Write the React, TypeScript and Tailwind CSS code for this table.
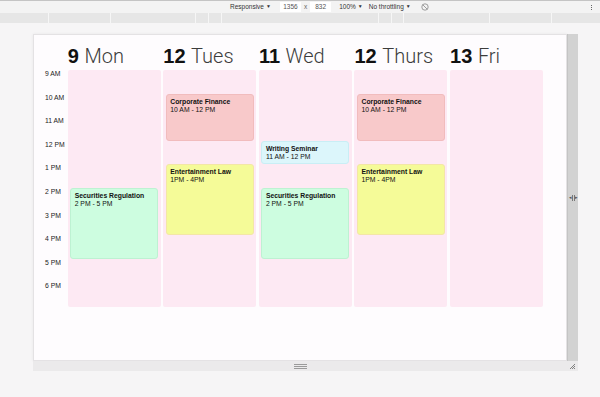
import React from 'react';

type CalEvent = { title: string; time: string; start: number; end: number; color: string };

const HOUR_PX = 23.6;
const FIRST_HOUR = 9;

const HOURS = ['9 AM', '10 AM', '11 AM', '12 PM', '1 PM', '2 PM', '3 PM', '4 PM', '5 PM', '6 PM'];

const EVENT_CLASS: Record<string, string> = {
  red: 'bg-[#f8c9ca] border-[#f1bcbd]',
  cyan: 'bg-[#dcf6fb] border-[#c9eef5]',
  yellow: 'bg-[#f5fb98] border-[#f3e6a6]',
  green: 'bg-[#cdfde0] border-[#bdf2d2]',
};

// start/end are the slot the block is drawn in, time is the label shown
const DAYS: { num: string; name: string; events: CalEvent[] }[] = [
  {
    num: '9',
    name: 'Mon',
    events: [{ title: 'Securities Regulation', time: '2 PM - 5 PM', start: 14, end: 17, color: 'green' }],
  },
  {
    num: '12',
    name: 'Tues',
    events: [
      { title: 'Corporate Finance', time: '10 AM - 12 PM', start: 10, end: 12, color: 'red' },
      { title: 'Entertainment Law', time: '1PM - 4PM', start: 13, end: 16, color: 'yellow' },
    ],
  },
  {
    num: '11',
    name: 'Wed',
    events: [
      { title: 'Writing Seminar', time: '11 AM - 12 PM', start: 12, end: 13, color: 'cyan' },
      { title: 'Securities Regulation', time: '2 PM - 5 PM', start: 14, end: 17, color: 'green' },
    ],
  },
  {
    num: '12',
    name: 'Thurs',
    events: [
      { title: 'Corporate Finance', time: '10 AM - 12 PM', start: 10, end: 12, color: 'red' },
      { title: 'Entertainment Law', time: '1PM - 4PM', start: 13, end: 16, color: 'yellow' },
    ],
  },
  { num: '13', name: 'Fri', events: [] },
];

// media query ruler segments (px)
const RULER = [48.6, 62.4, 85, 12.6, 13.4, 157, 13, 12.5, 85.5, 62];

function Toolbar() {
  return (
    <div className="h-[13px] border-t border-[#c4c4c4] bg-[#f3f3f3] flex items-center text-[6.5px] text-[#333] font-['Liberation_Sans',sans-serif]">
      <div className="ml-[230px] flex items-center gap-[2px]">
        <span>Responsive</span>
        <span className="text-[5px]">▼</span>
      </div>
      <div className="ml-[9px] w-[21px] h-[10px] bg-white flex items-center justify-center text-[#555]">1356</div>
      <span className="mx-[3px] text-[#666]">x</span>
      <div className="w-[21px] h-[10px] bg-white flex items-center justify-center text-[#555]">832</div>
      <div className="ml-[8px] flex items-center gap-[2px]">
        <span>100%</span>
        <span className="text-[5px]">▼</span>
      </div>
      <div className="ml-[6px] flex items-center gap-[2px]">
        <span>No throttling</span>
        <span className="text-[5px]">▼</span>
      </div>
      <svg className="ml-[10px]" width="8" height="8" viewBox="0 0 8 8" fill="none" stroke="#888" strokeWidth="0.8">
        <circle cx="4" cy="4" r="3.2" />
        <path d="M1.8 1.8 L6.2 6.2" />
      </svg>
      <div className="ml-auto mr-[8px] flex flex-col gap-[1px]">
        <span className="w-[1px] h-[1px] bg-[#666]" />
        <span className="w-[1px] h-[1px] bg-[#666]" />
        <span className="w-[1px] h-[1px] bg-[#666]" />
      </div>
    </div>
  );
}

function Ruler() {
  return (
    <div className="h-[10px] bg-[#e6e6e6] flex">
      {RULER.map((w, i) => (
        <div key={i} className="h-full border-r border-[#f6f6f6] shrink-0" style={{ width: w }} />
      ))}
    </div>
  );
}

function Calendar() {
  return (
    <div className="pt-[11px] pl-[11px] font-['Liberation_Sans',Arial,sans-serif] text-[#111]">
      <div className="grid grid-cols-[20.1px_repeat(5,93px)] gap-x-[2.6px]">
        <div />
        {DAYS.map((d, i) => (
          <div key={i} className="h-[24px] text-[20px] leading-[20px] whitespace-nowrap">
            <span className="font-bold">{d.num}</span>{' '}
            <span className="font-['Roboto',sans-serif] font-light text-[#3c3c3c]">{d.name}</span>
          </div>
        ))}

        <div className="flex flex-col">
          {HOURS.map(h => (
            <div key={h} className="h-[23.6px] text-[6.8px] leading-[8px] text-[#222] whitespace-nowrap">
              {h}
            </div>
          ))}
        </div>

        {DAYS.map((d, i) => (
          <div key={i} className="relative h-[236.5px] bg-[#fde9f3] rounded-[2px]">
            {d.events.map((e, j) => (
              <div
                key={j}
                className={`absolute left-[2.5px] right-[2.5px] border rounded-[3px] px-[3.5px] pt-[3px] text-[6.8px] leading-[8px] text-[#111] ${EVENT_CLASS[e.color]}`}
                style={{ top: (e.start - FIRST_HOUR) * HOUR_PX, height: (e.end - e.start) * HOUR_PX }}
              >
                <div className="font-bold">{e.title}</div>
                <div>{e.time}</div>
              </div>
            ))}
          </div>
        ))}
      </div>
    </div>
  );
}

export default function App() {
  return (
    <div className="w-[600px] h-[397px] bg-[#f6f5f6] flex flex-col overflow-hidden">
      <Toolbar />
      <Ruler />
      <div className="h-[11px]" />
      <div className="flex pl-[33px]">
        <div className="w-[534px] h-[327px] bg-[#fefcfe] border border-[#e4e2e4] shadow-[0_0_3px_rgba(0,0,0,0.06)]">
          <Calendar />
        </div>
        <div className="w-[11px] h-[327px] bg-[#d2d2d2] border-l border-[#c4c4c4] flex items-center justify-center">
          <div className="flex items-center">
            <span className="text-[5px] leading-none text-[#555]">◂</span>
            <div className="flex gap-[1px]">
              <span className="w-[1px] h-[6px] bg-[#777]" />
              <span className="w-[1px] h-[6px] bg-[#777]" />
            </div>
            <span className="text-[5px] leading-none text-[#555]">▸</span>
          </div>
        </div>
      </div>
      <div className="ml-[33px] w-[545px] h-[10px] bg-[#ebeaeb] flex items-center relative">
        <div className="ml-[261px] flex flex-col gap-[1px]">
          <span className="w-[13px] h-[1px] bg-[#9a9a9a]" />
          <span className="w-[13px] h-[1px] bg-[#9a9a9a]" />
          <span className="w-[13px] h-[1px] bg-[#9a9a9a]" />
        </div>
        <svg className="ml-auto mr-[2px]" width="7" height="7" viewBox="0 0 7 7" stroke="#666" strokeWidth="0.8">
          <path d="M1 6 L6 1 M3 6 L6 3 M5 6 L6 5" />
        </svg>
      </div>
    </div>
  );
}
